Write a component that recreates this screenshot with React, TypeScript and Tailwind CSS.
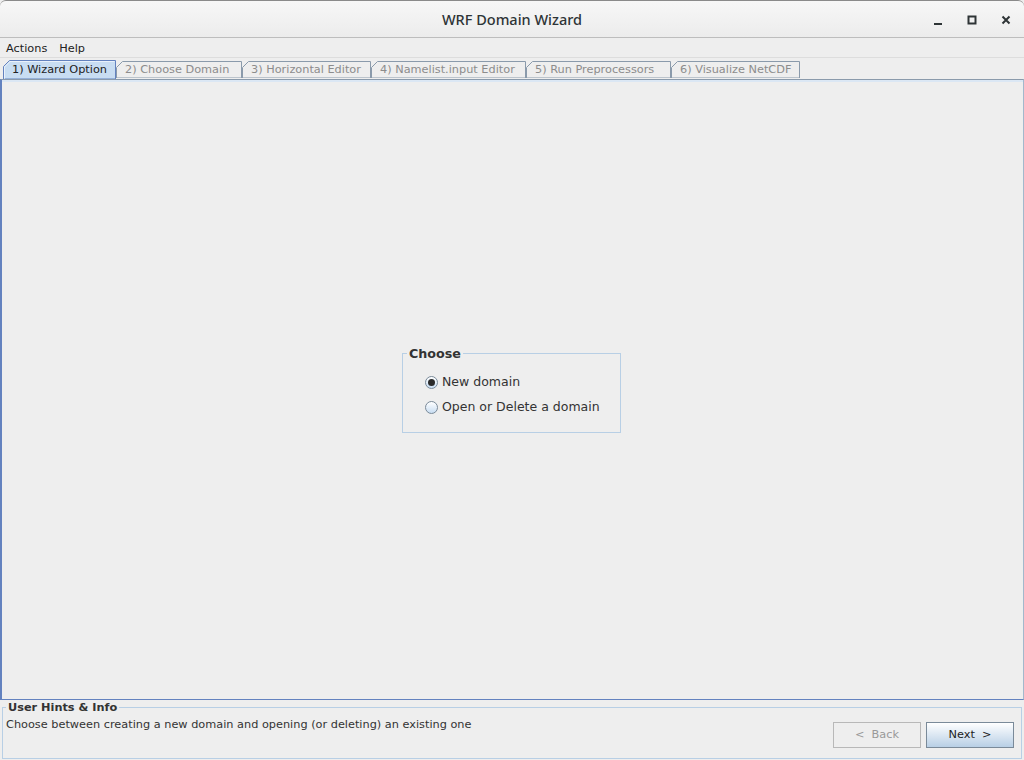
import React from "react";

const tabs = [
  { label: "1) Wizard Option", w: 113, selected: true },
  { label: "2) Choose Domain", w: 126 },
  { label: "3) Horizontal Editor", w: 129 },
  { label: "4) Namelist.input Editor", w: 155 },
  { label: "5) Run Preprocessors", w: 145 },
  { label: "6) Visualize NetCDF", w: 129 },
];

function Tab({ label, w, selected }: { label: string; w: number; selected?: boolean }) {
  const h = selected ? 19 : 17;
  return (
    <div
      className={
        "relative shrink-0 flex items-center pl-[9px] pt-[1px] " +
        (selected ? "h-[19px] text-[#222222] z-10" : "h-[17px] text-[#8c8c8c] mb-[1px]")
      }
      style={{ width: w }}
    >
      <svg className="absolute left-0 top-0" width={w} height={h}>
        <polygon
          points={`0.5,${h} 0.5,6.5 6.5,0.5 ${w - 0.5},0.5 ${w - 0.5},${h}`}
          fill={selected ? "#c8ddf2" : "#eeeeee"}
          stroke={selected ? "#6382bf" : "#8a9aab"}
          strokeWidth={1}
        />
        {selected && (
          <polyline
            points={`1.5,${h} 1.5,7 7,1.5 ${w - 1.5},1.5`}
            fill="none"
            stroke="#ffffff"
            strokeOpacity={0.6}
            strokeWidth={1}
          />
        )}
      </svg>
      <span className="relative whitespace-nowrap leading-none">{label}</span>
    </div>
  );
}

function Radio({ checked, label }: { checked?: boolean; label: string }) {
  return (
    <div className="flex items-center gap-[4px] h-[25px]">
      <div className="w-[13px] h-[13px] shrink-0 rounded-full border border-[#7a8a99] bg-gradient-to-b from-[#ffffff] to-[#c8ddf2] flex items-center justify-center">
        {checked && <div className="w-[7px] h-[7px] rounded-full bg-[#2a2a2a]" />}
      </div>
      <span className="text-[#333333] text-[12.5px] whitespace-nowrap">{label}</span>
    </div>
  );
}

export default function App() {
  return (
    <div className="w-[1024px] h-[760px] flex flex-col bg-[#eeeeee] overflow-hidden font-['DejaVu_Sans',sans-serif] text-[11.3px] text-[#333333]">
      {/* Title bar */}
      <div className="h-[38px] shrink-0 flex items-center bg-gradient-to-b from-[#f7f7f7] to-[#ececec] border-b border-[#bdbdbd] rounded-t-[6px] border-t border-t-[#8a8a8a]">
        <div className="w-[180px]" />
        <div className="flex-1 text-center font-['Noto_Sans',sans-serif] font-medium text-[14.5px] text-[#2e3436] pt-[1px]">
          WRF Domain Wizard
        </div>
        <div className="w-[180px] flex items-center justify-end pr-[10px] gap-[18px] text-[#2e3436] pt-[2px]">
          <svg width="16" height="16" viewBox="0 0 16 16">
            <rect x="4" y="11" width="8" height="2" fill="#2e3436" />
          </svg>
          <svg width="16" height="16" viewBox="0 0 16 16">
            <rect x="4.5" y="4.5" width="7" height="7" fill="none" stroke="#2e3436" strokeWidth="2" />
          </svg>
          <svg width="16" height="16" viewBox="0 0 16 16">
            <path d="M4.5 4.5 L11.5 11.5 M11.5 4.5 L4.5 11.5" stroke="#2e3436" strokeWidth="2" />
          </svg>
        </div>
      </div>

      {/* Menu bar */}
      <div className="h-[20px] shrink-0 flex items-center gap-[12px] pl-[6px] pt-[3px] bg-[#eeeeee] text-[#222222] border-b border-[#dddddd]">
        <span>Actions</span>
        <span>Help</span>
      </div>

      {/* Tab strip */}
      <div className="h-[21px] shrink-0 flex items-end pl-[3px] pt-[2px]">
        {tabs.map((t) => (
          <Tab key={t.label} {...t} />
        ))}
      </div>

      {/* Content */}
      <div className="flex-1 flex flex-col border-t border-[#8a9aab] border-l-2 border-l-[#6382bf] border-r border-r-[#a3b8cc] border-b border-b-[#6382bf]">
        <div className="h-[2px] bg-[#dbe7f4]" />
        <div className="flex-1 flex items-center justify-center pb-[3px] pr-[2px]">
          <div className="relative w-[219px] h-[80px] border border-[#b8cfe5] mt-[7px] pt-[16px] pl-[22px]">
            <span className="absolute left-[4px] top-[-10px] px-[2px] bg-[#eeeeee] font-bold text-[12.7px] text-[#333333]">
              Choose
            </span>
            <Radio checked label="New domain" />
            <Radio label="Open or Delete a domain" />
          </div>
        </div>
      </div>

      {/* Bottom hints */}
      <div className="h-[60px] shrink-0 px-[2px] pt-[7px] pb-[1px]">
        <div className="relative h-full border border-[#b8cfe5] flex items-start justify-between pl-[3px] pr-[7px]">
          <span className="absolute left-[3px] top-[-8px] px-[2px] bg-[#eeeeee] font-bold text-[#333333]">
            User Hints &amp; Info
          </span>
          <div className="pt-[9px] text-[#333333]">
            Choose between creating a new domain and opening (or deleting) an existing one
          </div>
          <div className="flex gap-[5px] mt-[14px]">
            <div className="w-[88px] h-[26px] border border-[#b8b8b8] flex items-center justify-center text-[#999999]">
              &lt;&nbsp; Back
            </div>
            <div className="w-[88px] h-[26px] border border-[#7a8a99] bg-gradient-to-b from-[#ffffff] to-[#b8cfe5] flex items-center justify-center text-[#222222]">
              Next&nbsp; &gt;
            </div>
          </div>
        </div>
      </div>
    </div>
  );
}
